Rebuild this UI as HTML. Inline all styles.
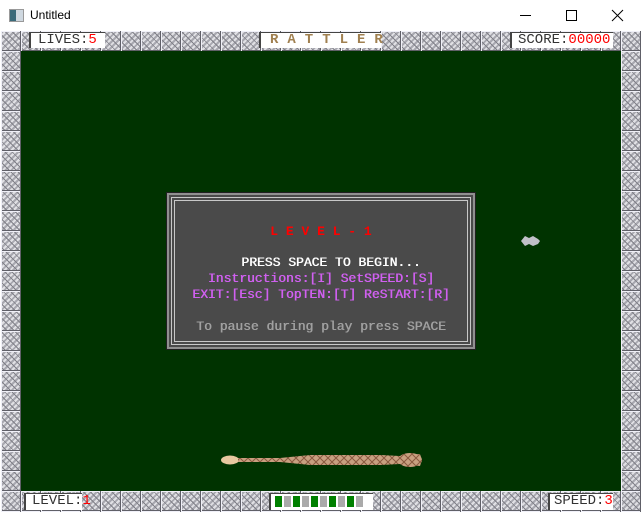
<!DOCTYPE html>
<html><head><style>
*{margin:0;padding:0;box-sizing:border-box}
body{width:642px;height:512px;overflow:hidden;background:#fff;position:relative;font-family:"Liberation Mono",monospace}
.title{position:absolute;left:0;top:0;width:642px;height:31px;background:#fff}
.title .t{position:absolute;left:30px;top:8px;font:12px "Liberation Sans",sans-serif;color:#000}
.icon{position:absolute;left:9px;top:9px;width:15px;height:13px;border:1px solid #999;background:linear-gradient(90deg,#3a6a7a 0 6px,#cfd8e0 6px)}
.frame{position:absolute;left:1px;top:31px;width:640px;height:481px;
background-color:#b8b8c0;
background-image:
linear-gradient(90deg,#f0f0f8 0 1px,transparent 1px 19px,#606068 19px),
linear-gradient(#f0f0f8 0 1px,transparent 1px 19px,#606068 19px),
repeating-linear-gradient(45deg,transparent 0 2px,#808088 2px 3px,transparent 3px 5px),
repeating-linear-gradient(-45deg,#e0e0e4 0 2px,#a8a8b0 2px 4px);
background-size:20px 20px,20px 20px,auto,auto}
.green{position:absolute;left:21px;top:51px;width:600px;height:440px;background:#003300}
.box{position:absolute;background:#fff;border-top:1px solid #444;border-left:2px solid #444;font-size:14px;color:#333;line-height:15px;font-family:"Liberation Mono",monospace}
.red{color:#f00}
.dlg{position:absolute;left:167px;top:193px;width:308px;height:156px;background:#4a4a4a;border:2px solid #909090;outline:1px solid #202020}
.dlg:before{content:"";position:absolute;left:2px;top:2px;right:2px;bottom:2px;border:1px solid #c8c8c8;box-shadow:inset 0 0 0 2px #4a4a4a,inset 0 0 0 3px #c8c8c8}
.ln{position:absolute;left:0;width:100%;text-align:center;font-size:13px;white-space:pre;text-shadow:0.5px 0 0 currentColor}
.spd{position:absolute;left:269px;top:493px;width:104px;height:17px;background:#fff;border-left:2px solid #444;border-top:1px solid #444;padding:2px 0 0 4px;display:flex;gap:2px}
.spd i{display:block;width:7px;height:11px;background:#aaa}
.spd i.g{background:#008000}
</style></head><body>
<div class="title"><div class="icon"></div><div class="t">Untitled</div>
<svg style="position:absolute;left:520px;top:9px" width="112" height="14"><line x1="0" y1="6.5" x2="11" y2="6.5" stroke="#000"/><rect x="46.5" y="1.5" width="10" height="10" fill="none" stroke="#000"/><path d="M92 1l11 11M103 1l-11 11" stroke="#000"/></svg></div>
<div class="frame"></div>
<div class="green"></div>
<div class="box" style="left:29px;top:32px;width:76px;height:16px;padding-left:7px">LIVES:<span class="red">5</span></div>
<div class="box" style="left:259px;top:32px;width:122px;height:16px;padding-left:9px;color:#a08050;font-weight:bold;letter-spacing:9px">RATTLER</div>
<div class="box" style="left:510px;top:32px;width:103px;height:16px;padding-left:6px">SCORE:<span class="red">00000</span></div>
<div class="box" style="left:24px;top:493px;width:58px;height:17px;padding-left:6px">LEVEL:<span class="red">1</span></div>
<div class="box" style="left:548px;top:493px;width:65px;height:17px;padding-left:4px">SPEED:<span class="red">3</span></div>
<div class="spd"><i class="g"></i><i></i><i class="g"></i><i></i><i class="g"></i><i></i><i class="g"></i><i></i><i class="g"></i><i></i></div>
<div class="dlg">
<div class="ln" style="top:29px;color:#f00;font-weight:bold;text-shadow:none">L E V E L - 1</div>
<div class="ln" style="top:60px;color:#fff;left:10px">PRESS SPACE TO BEGIN...</div>
<div class="ln" style="top:76px;color:#d060f0">Instructions:[I] SetSPEED:[S]</div>
<div class="ln" style="top:92px;color:#d060f0">EXIT:[Esc] TopTEN:[T] ReSTART:[R]</div>
<div class="ln" style="top:124px;color:#a0a0a0">To pause during play press SPACE</div>
</div>
<svg style="position:absolute;left:220px;top:450px" width="204" height="20">
<defs><pattern id="p" width="8" height="8" patternUnits="userSpaceOnUse"><rect width="8" height="8" fill="#c8a080"/><path d="M0 4L4 0L8 4L4 8Z" fill="none" stroke="#8a5a40" stroke-width="1"/></pattern></defs>
<ellipse cx="10" cy="10" rx="9" ry="4.5" fill="#e8c8a0"/>
<path d="M18 8L60 8L90 5L160 5L180 6L200 4L202 10L200 16L180 14L160 15L90 15L60 12L18 12Z" fill="url(#p)"/>
<ellipse cx="190" cy="10" rx="12" ry="7" fill="url(#p)"/>
</svg>
<svg style="position:absolute;left:519px;top:234px" width="22" height="14"><path d="M2 7L6 2L10 4L14 2L19 5L21 7L19 10L14 12L10 10L6 12Z" fill="#c0c0c8"/></svg>
</body></html>
